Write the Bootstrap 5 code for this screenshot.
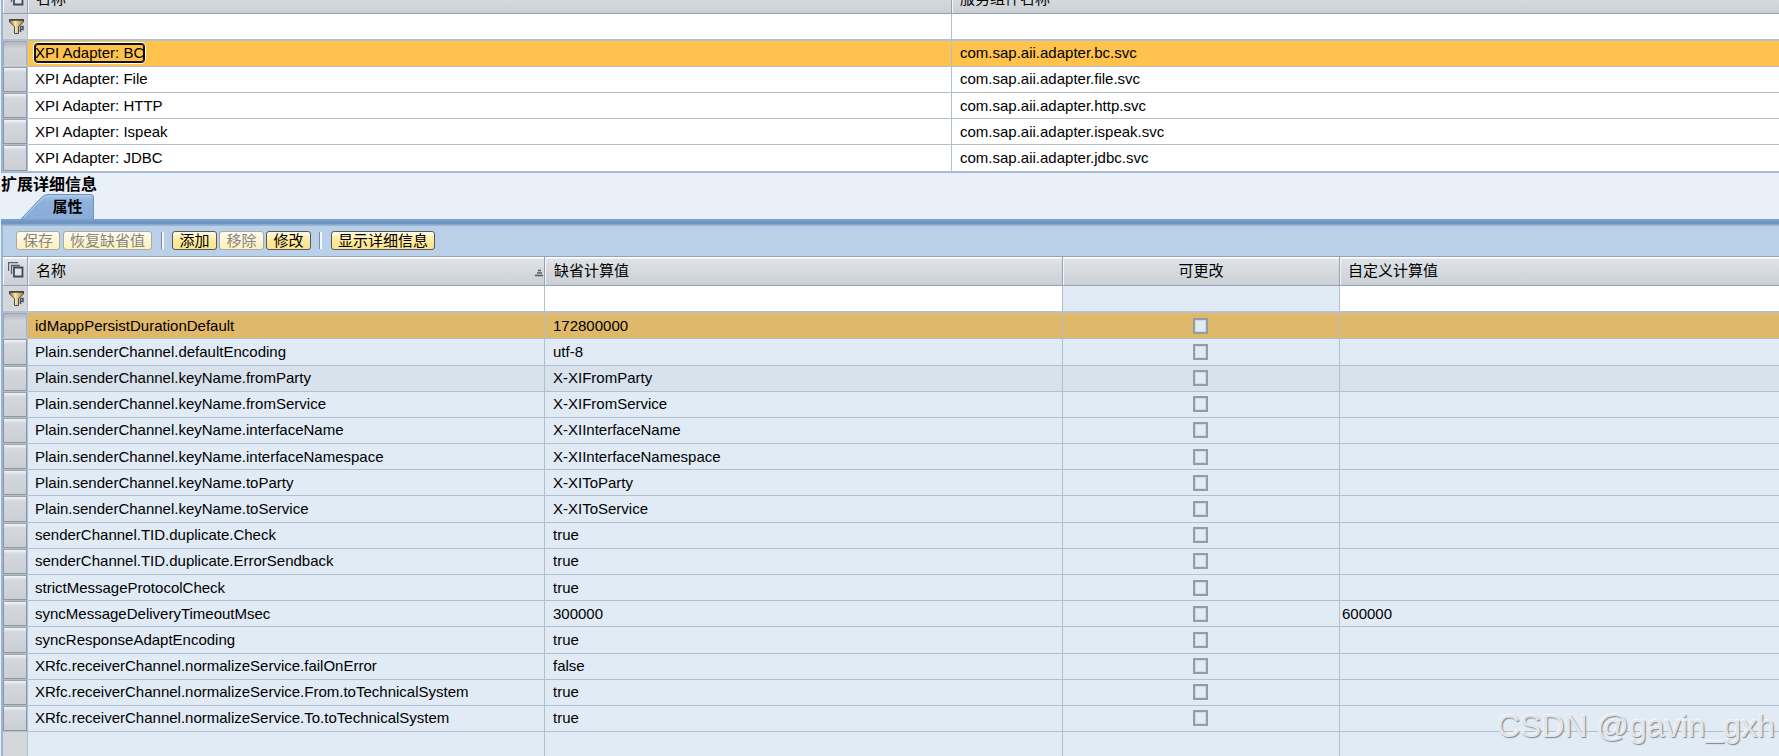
<!DOCTYPE html>
<html lang="zh-CN">
<head>
<meta charset="utf-8">
<title>XPI Adapter</title>
<link href="https://cdn.jsdelivr.net/npm/bootstrap@5.3.0/dist/css/bootstrap.min.css" rel="stylesheet">
<style>
body{height:756px;background:#e9f0f7;font:15px/20px "Liberation Sans","Noto Sans CJK SC",sans-serif;color:#000}
.pane{margin-left:1px;border-left:2px solid #9ab5d2}
.grow-row{height:26px}
.grow-row.tall{height:27px}
.sel{width:24px;border-bottom:1px solid #b2bfcd;background:#d4d8db}
.sel i{display:block;height:100%;border:1px solid #8a97a6;border-top-color:#98a4b2;background:linear-gradient(#f4f4f8 0,#d5d7df 4px,#cbcfd3 100%)}
.picked .sel i{border-color:#9aa5b1 #aab4bf #d4d8db #9aa5b1;background:linear-gradient(#b4b8be 0,#d0d3d8 7px,#c9cdd1 100%)}
.cel{border-left:1px solid #b2bfcd;border-bottom:1px solid #b2bfcd;padding:2px 8px 0;white-space:nowrap;overflow:hidden}
.grow-row .a1,.grow-row .b1{padding-left:7px}
.dn .cel{padding-top:3px}
.headr{height:29px}
.headr .cel,.headr .sel{border-bottom-color:#93a1b3;background:linear-gradient(#fff 0,#fff 1px,#dfe3e7 2px,#cbd0d4 100%);box-shadow:inset 1px 0 #f4f7f9}
.headr .cel{border-left-color:#93a1b3;padding-top:4px}
.headr .b2{padding-left:9px}
.filt{height:27px}
.filt .cel,.filt .sel{border-bottom:2px solid #b4c2d0}
.filt .cel{background:#fff}
.top-grid .grow-row .cel{background:#fff}
.top-grid .picked .cel{background:#ffc24c}
.a1{width:924px}.b1{width:517px}.b2{width:518px}.b3{width:277px;text-align:center}
.low-grid .cel{background:#e0ebf5}
.low-grid .picked .cel{background:#e0b86a}
.low-grid .hov .cel{background:#d8e2ec}
.low-grid .headr .cel{background:linear-gradient(#fff 0,#fff 1px,#dfe3e7 2px,#cbd0d4 100%)}
.low-grid .filt .cel{background:#fff}
.low-grid .filt .b3{background:#e0ebf5}
.low-grid .grow-row .b4{padding-left:2px}
.grow-row .b3{padding-right:10px}
.chk{display:inline-block;width:15px;height:16px;margin-top:2px;border:2px solid #939da5;background:#e0ecf3;box-shadow:inset 0 0 0 1px #d0dbe1;vertical-align:top}
.focused{display:inline-block;height:18px;line-height:17px;margin:1px 0 0;border-radius:3px;box-shadow:0 0 0 1px #111 inset,0 0 0 1px #111,0 0 0 2px #fff;vertical-align:top}
.ttl{font-size:16px;line-height:20px;padding:2px 0 0 1px;height:21px}
.tabrow{height:25px;padding-left:21px}
.bar{height:7px;margin-left:1px;background:linear-gradient(#7fa3cd,#6a90bf 60%,#86a7cb 75%,#a2bbd6)}
.tools{height:31px;padding:5px 0 0 13px;background:#b9d0e8;border-bottom:1px solid #93a3b8}
.tb{height:19px;padding:0;border:1px solid #57595a;border-radius:3px;background:linear-gradient(#fffbea,#ffec9c 45%,#fbe391);font-size:15px;line-height:17px;color:#000}
.tb.off{border-color:#a9aaa4;background:linear-gradient(#fffbee,#fdf0bd);color:#87857c}
.sepr{width:3px;height:17px;margin-top:1px;border-left:1px solid #7c8ca2;background:#f3f7fb}
.wm{position:absolute;left:1497px;top:706px;font:32px/40px "Liberation Sans",sans-serif;color:#e2e6ea;text-shadow:1px 1px 1px #7f868e,-1px -1px 0 #f4f6f8;white-space:nowrap}
svg{display:block}
</style>
</head>
<body class="overflow-hidden position-relative">
<svg width="0" height="0" class="position-absolute">
<defs>
<linearGradient id="gold"><stop offset="0" stop-color="#8d6c20"/><stop offset=".4" stop-color="#fbe9a6"/><stop offset="1" stop-color="#a17c2b"/></linearGradient>
<linearGradient id="tabg" x2="0" y2="1"><stop offset="0" stop-color="#a5c3e5"/><stop offset=".3" stop-color="#8fb2dc"/><stop offset="1" stop-color="#89abd6"/></linearGradient>
<symbol id="pick" viewBox="0 0 16 16"><g fill="none" stroke="#44475c"><path d="M.5 9V.5H10M3.500 12V3.500H12" stroke="#585c70" stroke-width="1.300"/><path d="M6 5.500H14.500V14.500H6Z" stroke-width="1.800" fill="#e0e4e9"/></g></symbol>
<symbol id="fun" viewBox="0 0 16 16"><path d="M.5.5H14.500V3L9.500 7.500V14.500H5.500V7.500L.5 3Z" fill="url(#gold)" stroke="#4e4b4a"/><path d="M0 1H15" stroke="#45424a" stroke-width="1.500"/><path d="M11.500 13V7.500H14V10.500H11.500" fill="none" stroke="#4c5064" stroke-width="1.500"/></symbol>
</defs>
</svg>
<div class="pane top-grid overflow-hidden">
  <div class="headr d-flex" style="margin-top:-15px"><div class="sel"><svg style="margin:5px 0 0 5px" width="16" height="16"><use href="#pick"/></svg></div><div class="cel a1">名称</div><div class="cel flex-grow-1">服务组件名称</div></div>
  <div class="filt d-flex"><div class="sel"><svg style="margin:5px 0 0 6px" width="16" height="16"><use href="#fun"/></svg></div><div class="cel a1"></div><div class="cel flex-grow-1"></div></div>
  <div id="adapters"></div>
</div>
<div style="height:1px;background:#9db8d4;margin-left:1px"></div>
<div class="ttl fw-bold">扩展详细信息</div>
<div class="tabrow"><svg width="74" height="25"><path d="M0 25L20 4Q23 .5 27 .5H70Q72.500 .5 72.500 3V25" fill="url(#tabg)" stroke="#6f94c2"/><path d="M3 23L21 5Q24 2 28 2H70" fill="none" stroke="#b4cdea"/><text x="31.500" y="18" font-size="15" font-weight="700" font-family="Noto Sans CJK SC, sans-serif">属性</text></svg></div>
<div class="bar"></div>
<div class="pane low-grid">
  <div class="tools d-flex align-items-start">
    <button class="tb off" style="width:44px">保存</button>
    <button class="tb off" style="width:89px;margin-left:3px">恢复缺省值</button>
    <div class="sepr" style="margin-left:9px"></div>
    <button class="tb" style="width:45px;margin-left:8px">添加</button>
    <button class="tb off" style="width:45px;margin-left:2px">移除</button>
    <button class="tb" style="width:45px;margin-left:2px">修改</button>
    <div class="sepr" style="margin-left:8px"></div>
    <button class="tb" style="width:104px;margin-left:9px">显示详细信息</button>
  </div>
  <div class="headr d-flex"><div class="sel"><svg style="margin:5px 0 0 5px" width="16" height="16"><use href="#pick"/></svg></div><div class="cel b1 d-flex justify-content-between pe-0">名称<svg width="9" height="8" class="mt-2"><path d="M3 1.500H6M2 4H7M0 6.500H8" stroke="#55586c" stroke-width="1.600"/></svg></div><div class="cel b2">缺省计算值</div><div class="cel b3">可更改</div><div class="cel b4 flex-grow-1">自定义计算值</div></div>
  <div class="filt d-flex"><div class="sel"><svg style="margin:5px 0 0 6px" width="16" height="16"><use href="#fun"/></svg></div><div class="cel b1"></div><div class="cel b2"></div><div class="cel b3"></div><div class="cel b4 flex-grow-1"></div></div>
  <div id="props"></div>
  <div class="grow-row d-flex"><div class="sel"></div><div class="cel b1"></div><div class="cel b2"></div><div class="cel b3"></div><div class="cel b4 flex-grow-1"></div></div>
</div>
<div class="wm">CSDN @gavin_gxh</div>
<script>
const adapters=[["<span class='focused'>XPI Adapter: BC</span>","bc","picked"],["XPI Adapter: File","file",""],["XPI Adapter: HTTP","http","dn"],["XPI Adapter: Ispeak","ispeak","dn"],["XPI Adapter: JDBC","jdbc","dn tall"]];
document.getElementById("adapters").innerHTML=adapters.map(([n,s,c])=>`<div class="grow-row d-flex ${c}"><div class="sel"><i></i></div><div class="cel a1">${n}</div><div class="cel flex-grow-1">com.sap.aii.adapter.${s}.svc</div></div>`).join("");
const P="Plain.senderChannel.",K=P+"keyName.",N="XRfc.receiverChannel.normalizeService.";
const props=[
["idMappPersistDurationDefault","172800000","picked dn"],
[P+"defaultEncoding","utf-8","dn tall"],
[K+"fromParty","X-XIFromParty","hov"],
[K+"fromService","X-XIFromService",""],
[K+"interfaceName","X-XIInterfaceName",""],
[K+"interfaceNamespace","X-XIInterfaceNamespace","dn"],
[K+"toParty","X-XIToParty","dn"],
[K+"toService","X-XIToService","dn tall"],
["senderChannel.TID.duplicate.Check","true",""],
["senderChannel.TID.duplicate.ErrorSendback","true",""],
["strictMessageProtocolCheck","true","dn"],
["syncMessageDeliveryTimeoutMsec","300000","dn","600000"],
["syncResponseAdaptEncoding","true","dn tall"],
[N+"failOnError","false",""],
[N+"From.toTechnicalSystem","true",""],
[N+"To.toTechnicalSystem","true",""]];
document.getElementById("props").innerHTML=props.map(([n,v,c,u=""])=>`<div class="grow-row d-flex ${c}"><div class="sel"><i></i></div><div class="cel b1">${n}</div><div class="cel b2">${v}</div><div class="cel b3"><span class="chk"></span></div><div class="cel b4 flex-grow-1">${u}</div></div>`).join("");
</script>
<script src="https://cdn.jsdelivr.net/npm/bootstrap@5.3.0/dist/js/bootstrap.bundle.min.js"></script>
</body>
</html>
